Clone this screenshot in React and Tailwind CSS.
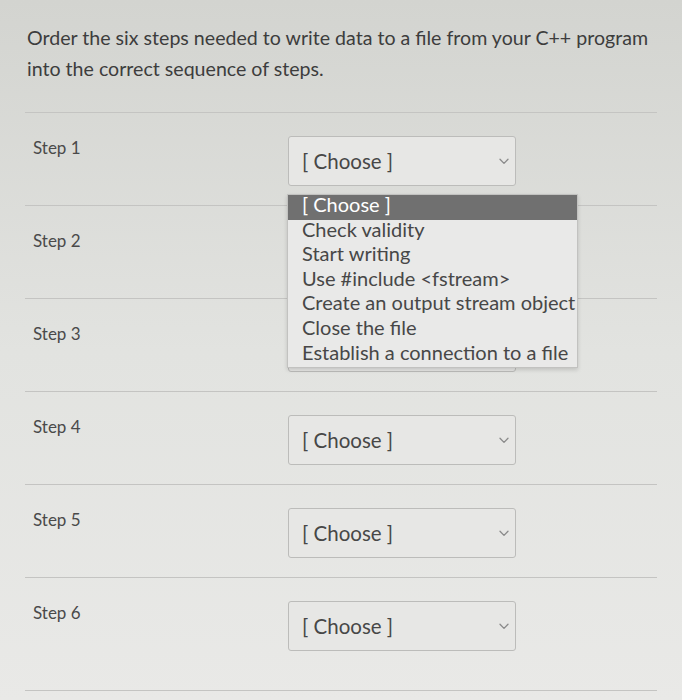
import React from "react";

const options = [
  "[ Choose ]",
  "Check validity",
  "Start writing",
  "Use #include <fstream>",
  "Create an output stream object",
  "Close the file",
  "Establish a connection to a file",
];

const Chevron = () => (
  <svg width="10" height="7" viewBox="0 0 10 7" fill="none">
    <path d="M1 1.2 L5 5.4 L9 1.2" stroke="#8a8a8a" strokeWidth="1.3" strokeLinecap="round" strokeLinejoin="round" />
  </svg>
);

// selects under the open list are covered, so their label is not drawn
const SelectBox = ({ covered }) => (
  <div className="w-[228px] h-[50px] border border-[#bcbcba] rounded-[3px] bg-[#e7e7e5] flex items-center justify-between pl-[13px] pr-[6px]">
    <span className={`text-[20.5px] text-[#474747] ${covered ? "invisible" : ""}`}>[ Choose ]</span>
    <Chevron />
  </div>
);

const StepRow = ({ n, last, covered }) => (
  <div className={`border-t border-[#c4c4c2] flex items-start pt-[23px] ${last ? "h-[113px]" : "h-[93px]"}`}>
    <div className="w-[263px] pl-[8px] text-[17px] leading-[24px] text-[#4a4a4a]">Step {n}</div>
    <SelectBox covered={covered} />
  </div>
);

export default function App() {
  return (
    <div
      className="relative h-[700px] w-[682px] overflow-hidden bg-gradient-to-b from-[#d3d4d0] via-[#e2e3e0] to-[#e9e9e7]"
      style={{ fontFamily: "Lato, 'Open Sans', sans-serif" }}
    >
      <div className="px-[25px]">
        <p className="pt-[22px] pl-[2px] pb-[28px] text-[19.6px] leading-[31px] text-[#3d3d3d]">
          Order the six steps needed to write data to a file from your C++ program into the correct sequence of steps.
        </p>
        {[1, 2, 3, 4, 5, 6].map((n) => (
          <StepRow key={n} n={n} last={n === 6} covered={n === 2 || n === 3} />
        ))}
        <div className="border-t border-[#c4c4c2]" />
      </div>

      {/* open dropdown list over step 2/3 */}
      <div className="absolute left-[287px] top-[194px] w-[291px] h-[174px] bg-[#e9e9e8] border border-[#c2c2c0] shadow-[0_2px_4px_rgba(0,0,0,0.15)]">
        {options.map((o, i) => (
          <div
            key={o}
            className={`pl-[14px] h-[24.6px] text-[20px] leading-[24.6px] whitespace-nowrap ${
              i === 0 ? "bg-[#707070] text-white" : "text-[#474747]"
            }`}
          >
            <span className="relative -top-[3px]">{o}</span>
          </div>
        ))}
      </div>
    </div>
  );
}
